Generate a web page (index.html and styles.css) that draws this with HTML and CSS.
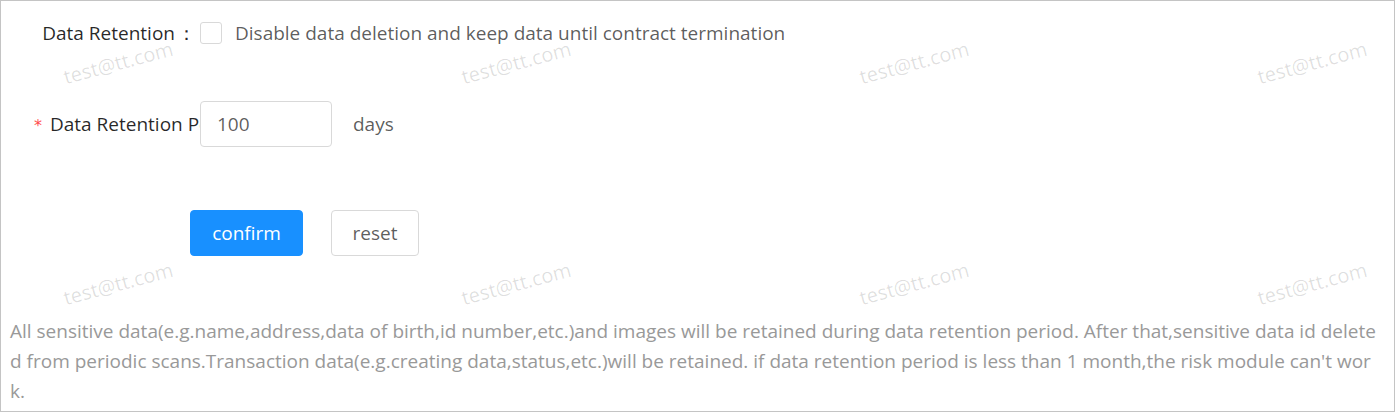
FILE: index.html
```html
<!DOCTYPE html>
<html lang="en">
<head>
<meta charset="utf-8">
<title>Data Retention</title>
<link rel="stylesheet" href="styles.css">
</head>
<body>
<div class="frame">
  <form class="form">
    <div class="row row-check">
      <label class="label">Data Retention</label>
      <div class="control">
        <span class="checkbox"></span>
        <span class="check-text">Disable data deletion and keep data until contract termination</span>
      </div>
    </div>
    <div class="row row-period">
      <label class="label label-required">Data Retention Period</label>
      <div class="control">
        <span class="input">100</span>
        <span class="unit">days</span>
      </div>
    </div>
    <div class="row row-actions">
      <button type="button" class="btn btn-primary">confirm</button>
      <button type="button" class="btn btn-default">reset</button>
    </div>
  </form>
  <p class="note">All sensitive data(e.g.name,address,data of birth,id number,etc.)and images will be retained during data retention period. After that,sensitive data id deleted from periodic scans.Transaction data(e.g.creating data,status,etc.)will be retained. if data retention period is less than 1 month,the risk module can't work.</p>
  <div class="watermarks" aria-hidden="true">
    <span class="wm">test@tt.com</span>
    <span class="wm">test@tt.com</span>
    <span class="wm">test@tt.com</span>
    <span class="wm">test@tt.com</span>
    <span class="wm">test@tt.com</span>
    <span class="wm">test@tt.com</span>
    <span class="wm">test@tt.com</span>
    <span class="wm">test@tt.com</span>
  </div>
</div>
</body>
</html>
```

FILE: styles.css
```css
html, body {
  margin: 0;
  padding: 0;
  background: #fff;
}
body {
  font-family: "Open Sans", "Noto Sans", sans-serif;
  font-size: 19px;
  color: rgba(0, 0, 0, 0.85);
}
.frame {
  position: relative;
  box-sizing: border-box;
  width: 1395px;
  height: 412px;
  border: 1px solid #c4c4c4;
  overflow: hidden;
}
.form {
  margin: 0;
  padding: 13px 0 0 0;
}
.row {
  display: flex;
  align-items: center;
}
.label {
  box-sizing: border-box;
  width: 199px;
  flex: none;
  white-space: nowrap;
  overflow: hidden;
  text-align: right;
  color: rgba(0, 0, 0, 0.85);
}
.row-check {
  height: 38px;
}
.row-check .label::after {
  content: "\FF1A";
  margin: 0 4px 0 2px;
}
.row-period {
  margin-top: 49px;
  height: 46px;
}
.row-period .label {
  width: 167px;
  margin-left: 32px;
  text-align: left;
}
.label-required::before {
  content: "*";
  color: #ff4d4f;
  margin-right: 8px;
  margin-left: 1px;
  font-family: SimSun, "DejaVu Sans", sans-serif;
  font-size: 16px;
}
.control {
  display: flex;
  align-items: center;
}
.checkbox {
  box-sizing: border-box;
  width: 22px;
  height: 22px;
  border: 1px solid #d9d9d9;
  border-radius: 3px;
  background: #fff;
  margin-right: 13px;
}
.check-text {
  color: rgba(0, 0, 0, 0.65);
}
.input {
  box-sizing: border-box;
  width: 132px;
  height: 46px;
  border: 1px solid #d9d9d9;
  border-radius: 4px;
  padding: 0 16px;
  display: flex;
  align-items: center;
  color: rgba(0, 0, 0, 0.65);
}
.unit {
  margin-left: 21px;
  color: rgba(0, 0, 0, 0.65);
}
.row-actions {
  margin-top: 63px;
  padding-left: 189px;
  gap: 28px;
}
.btn {
  box-sizing: border-box;
  height: 46px;
  border-radius: 4px;
  font-family: inherit;
  font-size: 19px;
  padding: 0;
  cursor: pointer;
}
.btn-primary {
  width: 113px;
  background: #1890ff;
  border: 1px solid #1890ff;
  color: #fff;
}
.btn-default {
  width: 88px;
  background: #fff;
  border: 1px solid #d9d9d9;
  color: rgba(0, 0, 0, 0.65);
}
.note {
  margin: 60px 0 0 0;
  padding: 0 9px;
  line-height: 30px;
  color: #999;
  word-break: break-all;
}
.watermarks {
  position: absolute;
  top: 0;
  left: 0;
  display: grid;
  grid-template-columns: repeat(4, 398px);
  grid-auto-rows: 221px;
  padding: 61px 0 0 117px;
  pointer-events: none;
}
.wm {
  width: 0;
  height: 0;
  display: flex;
  align-items: center;
  justify-content: center;
  white-space: nowrap;
  transform: rotate(-15deg);
  color: rgba(0, 0, 0, 0.13);
  font-size: 20px;
}
```
